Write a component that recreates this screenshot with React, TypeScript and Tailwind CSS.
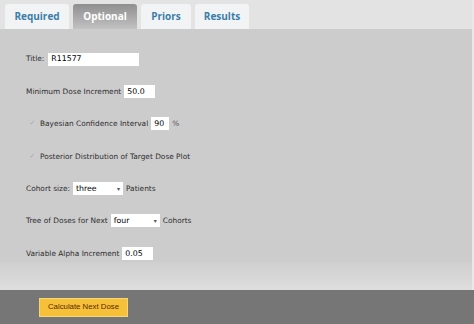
import React from "react";

const tabs = ["Required", "Optional", "Priors", "Results"];

function Field({ w, value }: { w: string; value: string }) {
  return (
    <span className={`inline-flex h-[13px] items-center bg-white px-[3px] text-[7.8px] text-black ${w}`}>
      {value}
    </span>
  );
}

function Select({ w, value }: { w: string; value: string }) {
  return (
    <span className={`inline-flex h-[13px] items-center justify-between bg-white px-[3px] text-[7.8px] text-black ${w}`}>
      <span>{value}</span>
      <span className="text-[6px] text-[#555]">▾</span>
    </span>
  );
}

function Check({ mr }: { mr: string }) {
  return (
    <span className={`inline-flex h-[7px] w-[7px] items-center justify-center text-[7px] leading-none text-[#aaa] ${mr}`}>
      ✓
    </span>
  );
}

export default function App() {
  return (
    <div className="flex h-[324px] w-[474px] flex-col bg-[#e9e9e9] font-['DejaVu_Sans',sans-serif] text-[7.4px] text-[#2e2e2e]">
      <div className="mr-[2px] flex flex-1 flex-col rounded-tr-[4px] bg-[#cccccc]">
        <div className="flex h-[29px] items-end gap-[4px] rounded-tr-[4px] bg-[#e3e3e3] pl-[5px] font-['Open_Sans',sans-serif] text-[10px] font-bold">
          {tabs.map((t) =>
            t === "Optional" ? (
              <div
                key={t}
                className="flex h-[25px] w-[64px] items-center justify-center rounded-t-[3px] bg-gradient-to-b from-[#8f8f8f] to-[#c2c2c2] text-white"
              >
                {t}
              </div>
            ) : (
              <div
                key={t}
                className={`flex h-[25px] items-center justify-center rounded-t-[3px] bg-[#f2f3f5] text-[#3b7ea8] ${
                  t === "Required" ? "w-[64px]" : t === "Priors" ? "w-[50px]" : "w-[54px]"
                }`}
              >
                {t}
              </div>
            )
          )}
        </div>
        <div className="flex flex-col gap-[19.4px] pl-[26px] pt-[23.5px]">
          <div className="flex h-[13px] items-center gap-[4px]">
            <span>Title:</span>
            <Field w="w-[91px]" value="R11577" />
          </div>
          <div className="flex h-[13px] items-center gap-[3px]">
            <span>Minimum Dose Increment</span>
            <Field w="w-[31px]" value="50.0" />
          </div>
          <div className="flex h-[13px] items-center gap-[3px] pl-[3px]">
            <Check mr="mr-[1px]" />
            <span>Bayesian Confidence Interval</span>
            <Field w="w-[18px]" value="90" />
            <span className="text-[#555]">%</span>
          </div>
          <div className="flex h-[13px] items-center pl-[3px]">
            <Check mr="mr-[4px]" />
            <span>Posterior Distribution of Target Dose Plot</span>
          </div>
          <div className="flex h-[13px] items-center gap-[3px]">
            <span>Cohort size:</span>
            <Select w="w-[50px]" value="three" />
            <span>Patients</span>
          </div>
          <div className="flex h-[13px] items-center gap-[3px]">
            <span>Tree of Doses for Next</span>
            <Select w="w-[49px]" value="four" />
            <span>Cohorts</span>
          </div>
          <div className="flex h-[13px] items-center gap-[3px]">
            <span>Variable Alpha Increment</span>
            <Field w="w-[31px]" value="0.05" />
          </div>
        </div>
        <div className="mt-auto h-[28px] bg-gradient-to-b from-[#cfcfcf] to-[#dedede]" />
      </div>
      <div className="flex h-[34px] items-center bg-[#767676] pl-[39px]">
        <button className="flex h-[19px] w-[89px] items-center justify-center border border-[#f5d57a] bg-[#f6c038] font-['Liberation_Sans',sans-serif] text-[7.8px] text-[#5a2a05]">
          Calculate Next Dose
        </button>
      </div>
    </div>
  );
}
